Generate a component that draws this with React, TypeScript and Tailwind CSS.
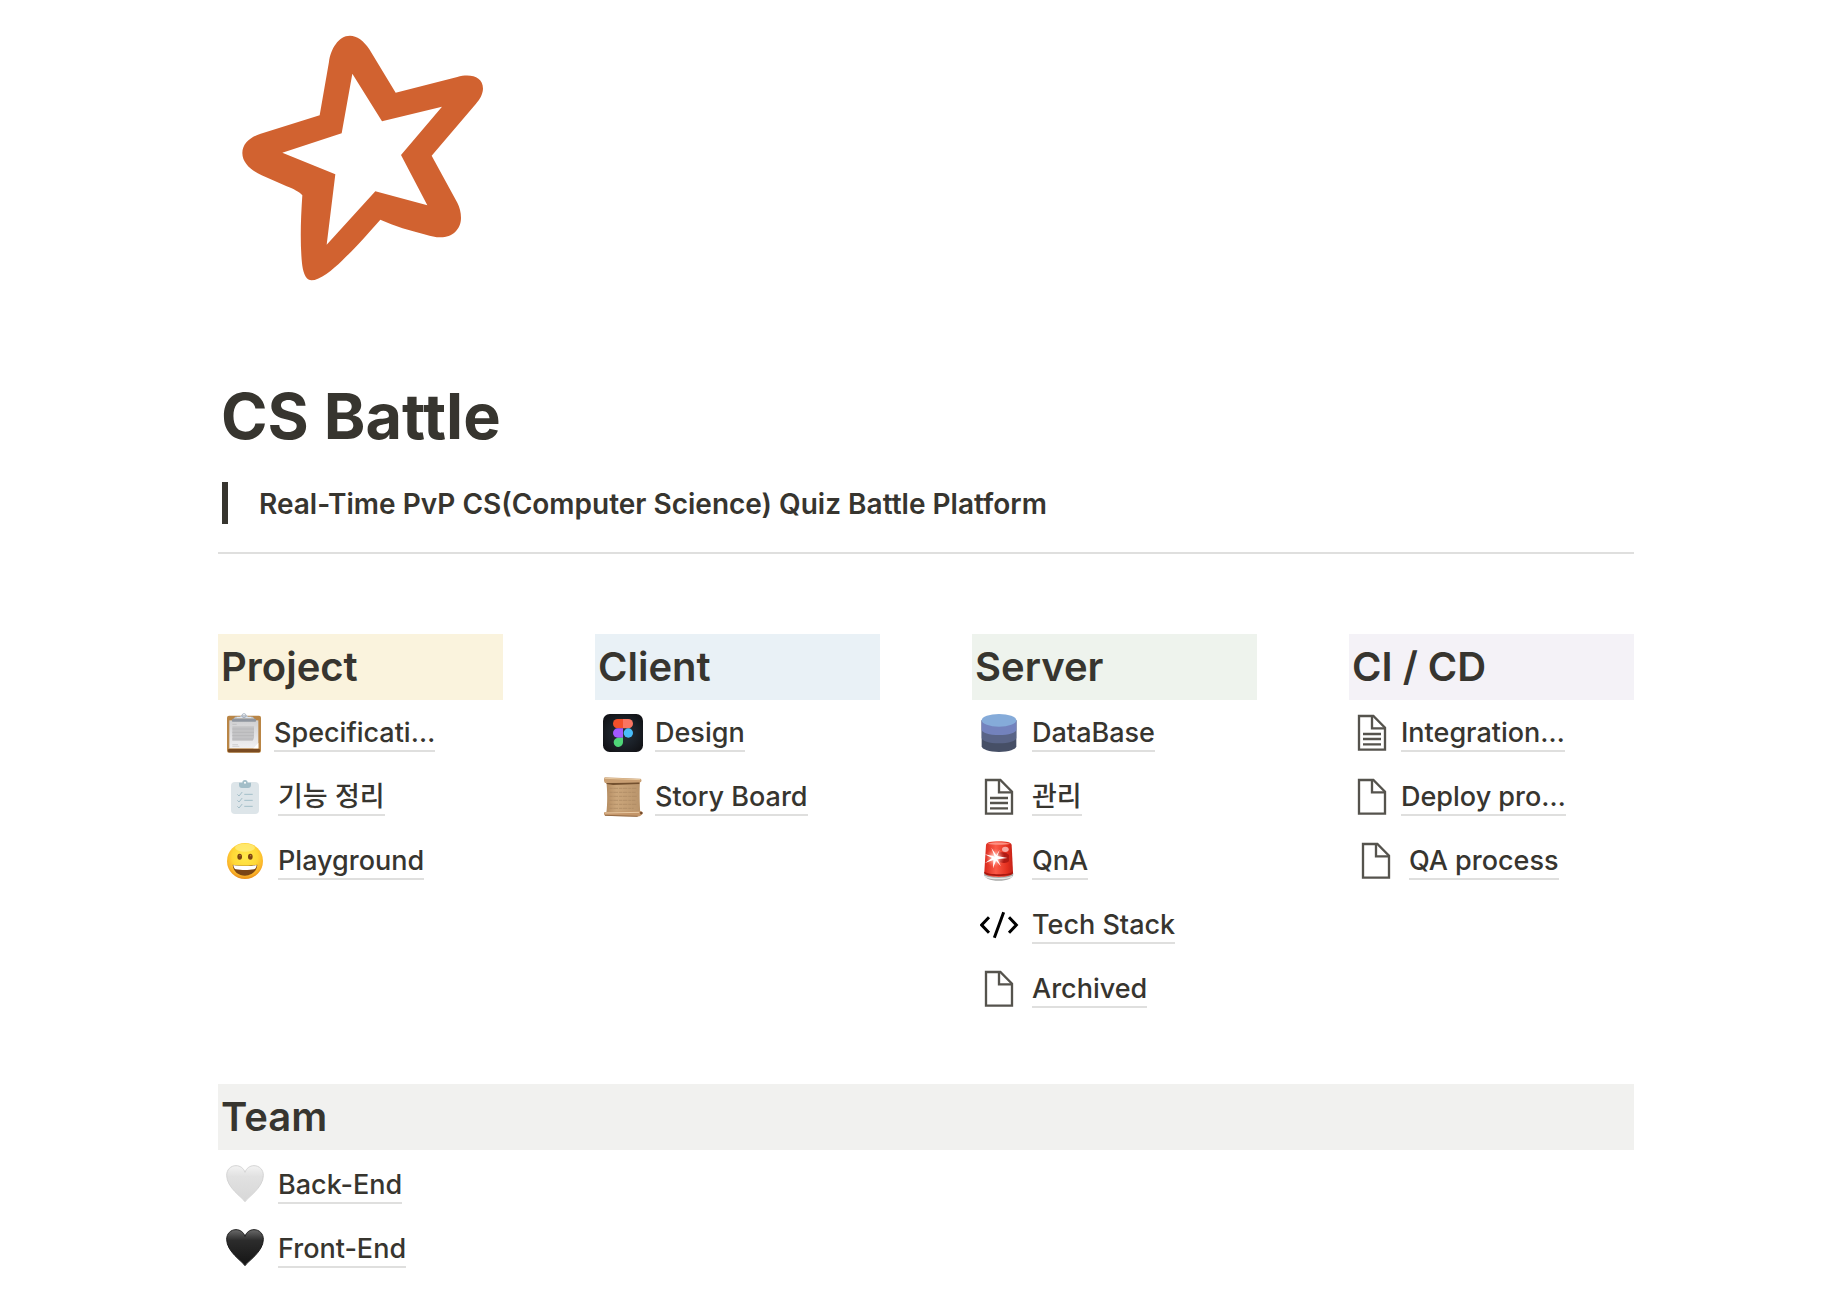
import React from 'react';
import clsx from 'clsx';

function StarLogo() {
  return (
    <svg viewBox="-6 0 876 840" className="w-[292px] h-[280px]" role="img" aria-label="CS Battle">
      <path
        fill="#d16230"
        fillRule="evenodd"
        d="M390 47C410 47 432 62 448 88L527 218L712 171C752 160 789 170 789 206C788 224 779 238 768 251L635 407L712 548C719 562 723 576 723 593C723 628 697 652 662 652C646 652 632 648 618 644C570 632 524 618 481 599C450 634 408 682 366 722C338 749 300 781 274 781C254 781 248 748 246 730C240 670 242 600 247 526C236 514 222 508 200 499L125 466C96 453 67 430 67 399C67 368 95 350 122 341L299 286L327 125C332 88 355 47 390 47Z
        M397 161L365 340L187 398L346 463L320 674L466 514L622 556L543 405L666 260L486 304Z"
      />
    </svg>
  );
}

function IconFrame({ children }: { children: React.ReactNode }) {
  return (
    <svg viewBox="0 0 120 120" className="w-10 h-10 shrink-0" aria-hidden="true">
      {children}
    </svg>
  );
}

function ClipboardIcon() {
  return (
    <IconFrame>
      <defs>
        <linearGradient id="paper" x1="0" y1="0" x2="0" y2="1">
          <stop offset="0" stopColor="#cfcfd1" />
          <stop offset="1" stopColor="#f1f1f3" />
        </linearGradient>
      </defs>
      <rect x="9" y="8" width="102" height="111" rx="6" fill="#b98545" />
      <rect x="12" y="108" width="96" height="10" rx="3" fill="#7a4b22" />
      <rect x="16" y="22" width="87" height="84" fill="url(#paper)" />
      <path d="M16 106H103V90L88 106Z" fill="#fff" />
      <path d="M25 34H38" stroke="#b5b5b8" strokeWidth="2" />
      <path d="M25 40H90V74L86 83H25Z" fill="#c3c3c5" />
      <path d="M25 48H90M25 58H90M25 68H89M25 78H88" stroke="#b7b7ba" strokeWidth="3" />
      <path d="M25 95H42M25 100H46" stroke="#c3c3c6" strokeWidth="2" />
      <rect x="24" y="17" width="72" height="9" rx="2" fill="#8f959f" />
      <path d="M28 17L34 11H48L52 7H68L72 11H86L92 17Z" fill="#b8c1cd" />
      <path d="M38 13H82" stroke="#e6ebf2" strokeWidth="3" />
      <circle cx="60" cy="8" r="6" fill="none" stroke="#a9b4c2" strokeWidth="3" />
    </IconFrame>
  );
}

function ChecklistIcon() {
  return (
    <IconFrame>
      <rect x="15" y="15" width="84" height="96" rx="12" fill="#dde5e9" />
      <path d="M39 17H49A8 8 0 0 1 65 17H75V24A9 9 0 0 1 66 33H48A9 9 0 0 1 39 24Z" fill="#a3bec8" />
      <circle cx="57" cy="17" r="3" fill="#fff" />
      <path d="M56 52H79M56 70H79M56 88H79" stroke="#a3bec8" strokeWidth="3" strokeLinecap="round" />
      <path d="M35 53L39 57L48 46M35 71L39 75L48 64M35 89L39 93L48 82" fill="none" stroke="#a3bec8" strokeWidth="3" strokeLinecap="round" />
    </IconFrame>
  );
}

function GrinIcon() {
  return (
    <IconFrame>
      <defs>
        <radialGradient id="grin" cx=".5" cy=".38" r=".64">
          <stop offset="0" stopColor="#ffe94a" />
          <stop offset=".55" stopColor="#ffd836" />
          <stop offset=".82" stopColor="#fbb32a" />
          <stop offset="1" stopColor="#e48411" />
        </radialGradient>
      </defs>
      <circle cx="57" cy="60" r="54" fill="url(#grin)" />
      <ellipse cx="57" cy="20" rx="30" ry="12" fill="#fff6a0" opacity=".5" />
      <ellipse cx="41" cy="47" rx="7" ry="9" fill="#7b4312" />
      <ellipse cx="73" cy="47" rx="7" ry="9" fill="#7b4312" />
      <circle cx="42" cy="44" r="2" fill="#c58a4a" />
      <circle cx="74" cy="44" r="2" fill="#c58a4a" />
      <path d="M20 71C34 75 80 75 94 71C92 92 76 104 57 104C38 104 22 92 20 71Z" fill="#7a4415" />
      <path d="M22 72C36 76 78 76 92 72C91 80 88 84 84 85C68 88 46 88 30 85C26 84 23 80 22 72Z" fill="#fff" />
    </IconFrame>
  );
}

function FigmaIcon() {
  return (
    <IconFrame>
      <defs>
        <radialGradient id="figma-bg" cx=".5" cy=".5" r=".6">
          <stop offset="0" stopColor="#27333f" />
          <stop offset="1" stopColor="#121317" />
        </radialGradient>
      </defs>
      <rect x="0" y="3" width="120" height="114" rx="20" fill="url(#figma-bg)" />
      <path d="M60 18H44A14 14 0 0 0 44 46H60Z" fill="#f4502a" />
      <path d="M60 18H76A14 14 0 0 1 76 46H60Z" fill="#fa7562" />
      <path d="M60 46H44A14 14 0 0 0 44 74H60Z" fill="#a259ff" />
      <circle cx="76" cy="60" r="14" fill="#49bdfa" />
      <path d="M60 74H45A14 14 0 1 0 60 88Z" fill="#4fd678" />
    </IconFrame>
  );
}

function ScrollIcon() {
  return (
    <IconFrame>
      <defs>
        <linearGradient id="scroll" x1="0" y1="0" x2="1" y2="0">
          <stop offset="0" stopColor="#b58d62" />
          <stop offset=".3" stopColor="#cba67b" />
          <stop offset="1" stopColor="#b9946b" />
        </linearGradient>
      </defs>
      <path d="M10 12H111C109 40 110 80 112 108H10C14 80 13 40 10 12Z" fill="url(#scroll)" />
      <path d="M10 18L109 16V21L30 24L11 21Z" fill="#73502f" />
      <path d="M5 1L113 5C117 8 116 14 112 16L6 18C2 15 2 5 5 1Z" fill="#c99f73" />
      <path d="M6 4L112 8" stroke="#e6c8a0" strokeWidth="3" />
      <path d="M20 34H100M20 46H98M20 58H101M20 70H97M20 82H100M20 94H92" stroke="#a98661" strokeWidth="2" strokeDasharray="9 2 14 3" />
      <path d="M5 105L112 102C120 103 120 112 115 114C112 117 106 120 98 119L6 116C2 113 2 108 5 105Z" fill="#c4966a" />
      <path d="M6 108L108 106" stroke="#e8c9a2" strokeWidth="3" />
      <path d="M6 115L104 118" stroke="#7c5432" strokeWidth="2" />
      <circle cx="115" cy="108" r="4" fill="#754b2b" />
    </IconFrame>
  );
}

function DatabaseIcon() {
  return (
    <IconFrame>
      <path d="M5 22V100C5 109 28 117 57 117S109 109 109 100V22Z" fill="#464f66" />
      <path d="M5 22V75C5 84 28 91 57 91S109 84 109 75V22Z" fill="#596487" />
      <path d="M5 22V50C5 59 28 66 57 66S109 59 109 50V22Z" fill="#7382bd" />
      <ellipse cx="57" cy="22" rx="52" ry="19" fill="#85abd9" />
    </IconFrame>
  );
}

function PageIcon({ lines = false }: { lines?: boolean }) {
  return (
    <IconFrame>
      <g fill="none" stroke="#55534d" strokeWidth="7">
        <path d="M18 9H61L96 44V110H18Z" />
        <path d="M57 9V46H96" />
        {lines && <path d="M30 63H84M30 78H84M30 94H84" />}
      </g>
    </IconFrame>
  );
}

function SirenIcon() {
  return (
    <IconFrame>
      <defs>
        <linearGradient id="siren" x1="0" y1="0" x2="1" y2="0">
          <stop offset="0" stopColor="#d8281c" />
          <stop offset=".4" stopColor="#fb5a47" />
          <stop offset=".8" stopColor="#e3301f" />
          <stop offset="1" stopColor="#c42117" />
        </linearGradient>
        <radialGradient id="siren-glow">
          <stop offset="0" stopColor="#fff" />
          <stop offset=".35" stopColor="#ffc9bf" stopOpacity=".8" />
          <stop offset="1" stopColor="#ff7465" stopOpacity="0" />
        </radialGradient>
      </defs>
      <path d="M12 98C12 112 30 119 56 119S100 112 100 98L97 90H15Z" fill="#a9aaa8" />
      <path d="M15 106C30 115 80 115 97 106" fill="none" stroke="#e5e6e4" strokeWidth="4" />
      <path d="M18 12C19 4 33 1 56 1S94 4 95 12L99 94C97 104 78 108 56 108S15 104 13 94Z" fill="url(#siren)" />
      <path d="M13 92C24 102 88 102 99 92V97C92 108 20 108 13 97Z" fill="#a9180f" />
      <path d="M22 8C38 3 74 3 91 8C76 12 38 12 22 8Z" fill="#fb9184" />
      <path d="M52 38C66 30 80 34 87 42V60C80 68 70 66 60 64Z" fill="#b11b14" />
      <ellipse cx="76" cy="25" rx="10" ry="8" fill="#f7a8a2" />
      <circle cx="45" cy="50" r="29" fill="url(#siren-glow)" />
      <path d="M45 50L34 20L49 43L59 26L52 45L82 51L52 55L63 76L48 59L39 82L40 57L15 66L36 51L14 40L40 45Z" fill="#fff" />
    </IconFrame>
  );
}

function CodeIcon() {
  return (
    <IconFrame>
      <path d="M27 37L5 60L27 83M87 37L109 60L87 83M71 22L43 98" fill="none" stroke="#000" strokeWidth="9" />
    </IconFrame>
  );
}

function HeartIcon({ dark = false }: { dark?: boolean }) {
  const id = dark ? 'heart-dark' : 'heart-light';
  return (
    <IconFrame>
      <defs>
        <linearGradient id={id} x1="0" y1="0" x2="0" y2="1">
          <stop offset="0" stopColor={dark ? '#6a6a6a' : '#f3f3f3'} />
          <stop offset=".3" stopColor={dark ? '#2c2c2c' : '#e1e1e1'} />
          <stop offset="1" stopColor={dark ? '#141414' : '#d7d7d7'} />
        </linearGradient>
      </defs>
      <path
        d="M57 110C49 97 2 68 2 31C2 14 14 2 30 2C43 2 53 10 57 22C61 10 71 2 84 2C100 2 112 14 112 31C112 68 65 97 57 110Z"
        fill={`url(#${id})`}
        stroke={dark ? '#1b1b1b' : '#d4d4d4'}
        strokeWidth="3"
      />
    </IconFrame>
  );
}

type Item = {
  label: string;
  icon: React.ReactNode;
  slot?: string;
};

type Section = {
  title: string;
  color: string;
  items: Item[];
};

const sections: Section[] = [
  {
    title: 'Project',
    color: 'bg-[#faf3dd]',
    items: [
      { label: 'Specificati…', icon: <ClipboardIcon />, slot: 'w-9' },
      { label: '기능 정리', icon: <ChecklistIcon /> },
      { label: 'Playground', icon: <GrinIcon /> },
    ],
  },
  {
    title: 'Client',
    color: 'bg-[#e9f1f6]',
    items: [
      { label: 'Design', icon: <FigmaIcon /> },
      { label: 'Story Board', icon: <ScrollIcon /> },
    ],
  },
  {
    title: 'Server',
    color: 'bg-[#eef3ed]',
    items: [
      { label: 'DataBase', icon: <DatabaseIcon /> },
      { label: '관리', icon: <PageIcon lines /> },
      { label: 'QnA', icon: <SirenIcon /> },
      { label: 'Tech Stack', icon: <CodeIcon /> },
      { label: 'Archived', icon: <PageIcon /> },
    ],
  },
  {
    title: 'CI / CD',
    color: 'bg-[#f4f2f7]',
    items: [
      { label: 'Integration…', icon: <PageIcon lines />, slot: 'w-8' },
      { label: 'Deploy pro…', icon: <PageIcon />, slot: 'w-8' },
      { label: 'QA process', icon: <PageIcon /> },
    ],
  },
];

const team: Section = {
  title: 'Team',
  color: 'bg-[#f1f1ef]',
  items: [
    { label: 'Back-End', icon: <HeartIcon /> },
    { label: 'Front-End', icon: <HeartIcon dark /> },
  ],
};

function LinkSection({ section, listClass = 'pt-0.5' }: { section: Section; listClass?: string }) {
  return (
    <section className="min-w-0">
      <h2 className={clsx('px-[3px] py-2 text-[40px] leading-[50px] font-semibold', section.color)}>
        {section.title}
      </h2>
      <ul className={listClass}>
        {section.items.map((item) => (
          <li key={item.label} className="flex h-16 items-center pl-2">
            <a href="#" className="flex items-center gap-3 text-[27px] font-medium whitespace-nowrap">
              <span className={clsx('flex shrink-0 justify-center pb-0.5', item.slot ?? 'w-10')}>{item.icon}</span>
              <span className="border-b-2 border-[#dfdfde] leading-[34px]">{item.label}</span>
            </a>
          </li>
        ))}
      </ul>
    </section>
  );
}

function App() {
  return (
    <main className="min-h-screen bg-white pt-5 pr-[192px] pl-[218px] font-['Inter','Noto_Sans_CJK_KR',sans-serif] text-[#37352f]">
      <StarLogo />

      <h1 className="mt-[78px] px-[3px] text-[63px] leading-[76px] font-bold">CS Battle</h1>

      <blockquote className="mt-7 ml-1 border-l-6 border-[#37352f] pl-[31px] text-[28px] leading-[42px] font-semibold">
        <p className="pt-0.5 leading-[40px]">Real-Time PvP CS(Computer Science) Quiz Battle Platform</p>
      </blockquote>

      <hr className="mt-7 border-t-2 border-[#dfdfde]" />

      {/* Links */}
      <div className="mt-20 grid grid-cols-4 gap-[92px]">
        {sections.map((section) => (
          <LinkSection key={section.title} section={section} />
        ))}
      </div>

      {/* Team */}
      <div className="mt-[62px]">
        <LinkSection section={team} listClass="pt-1" />
      </div>
    </main>
  );
}

export default App;
